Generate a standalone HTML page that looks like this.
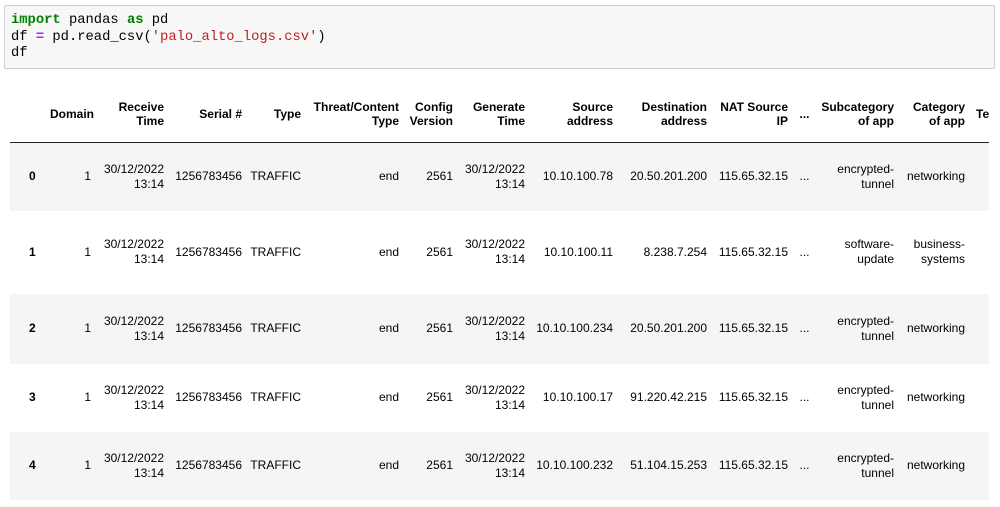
<!DOCTYPE html>
<html><head><meta charset="utf-8"><style>
body{margin:0;background:#fff;width:1000px;height:507px;overflow:hidden;font-family:"Liberation Sans",Arial,sans-serif;color:#000}
.code{position:absolute;left:4px;top:5px;width:989px;height:62px;background:#f7f7f7;border:1px solid #cfcfcf;border-radius:2px}
.code pre{margin:0;position:absolute;left:6px;top:7px;font-family:"Liberation Mono",monospace;font-size:13.8px;line-height:16.5px;color:#000}
.k{color:#008000;font-weight:bold}.o{color:#aa22ff;font-weight:bold}.s{color:#ba2121}
table{position:absolute;left:10px;top:92px;border-collapse:collapse;table-layout:fixed;width:979px;font-size:12px}
td,th{text-align:right;padding:0 5px 0 0;line-height:15px;white-space:nowrap;overflow:visible}
th{font-weight:bold;vertical-align:middle;padding-bottom:6px;height:44px;line-height:14px}
thead tr{border-bottom:1.5px solid #222}
td{vertical-align:middle}
tbody tr:nth-child(odd){background:#f5f5f5}
td.i{text-align:left;padding-left:19px;font-weight:bold}
.l{text-align:left;padding-left:6px}
</style></head><body>
<div class="code"><pre><span class="k">import</span> pandas <span class="k">as</span> pd
df <span class="o">=</span> pd.read_csv(<span class="s">'palo_alto_logs.csv'</span>)
df</pre></div>
<table>
<colgroup><col style="width:40px"><col style="width:46px"><col style="width:73px"><col style="width:78px"><col style="width:59px"><col style="width:98px"><col style="width:54px"><col style="width:72px"><col style="width:88px"><col style="width:94px"><col style="width:81px"><col style="width:23px"><col style="width:83px"><col style="width:71px"><col style="width:19px"></colgroup>
<thead><tr><th></th><th style="padding-right:7px">Domain</th><th>Receive<br>Time</th><th>Serial #</th><th>Type</th><th>Threat/Content<br>Type</th><th>Config<br>Version</th><th>Generate<br>Time</th><th>Source<br>address</th><th>Destination<br>address</th><th>NAT Source<br>IP</th><th style="text-align:center;padding:0 0 6px 0">...</th><th>Subcategory<br>of app</th><th>Category<br>of app</th><th class="l">Te</th></tr></thead>
<tbody>
<tr style="height:68px"><td class="i">0</td><td>1</td><td>30/12/2022<br>13:14</td><td>1256783456</td><td>TRAFFIC</td><td>end</td><td>2561</td><td>30/12/2022<br>13:14</td><td>10.10.100.78</td><td>20.50.201.200</td><td>115.65.32.15</td><td style="text-align:center;padding:0">...</td><td>encrypted-<br>tunnel</td><td>networking</td><td></td></tr>
<tr style="height:83px"><td class="i">1</td><td>1</td><td>30/12/2022<br>13:14</td><td>1256783456</td><td>TRAFFIC</td><td>end</td><td>2561</td><td>30/12/2022<br>13:14</td><td>10.10.100.11</td><td>8.238.7.254</td><td>115.65.32.15</td><td style="text-align:center;padding:0">...</td><td>software-<br>update</td><td>business-<br>systems</td><td></td></tr>
<tr style="height:70px"><td class="i">2</td><td>1</td><td>30/12/2022<br>13:14</td><td>1256783456</td><td>TRAFFIC</td><td>end</td><td>2561</td><td>30/12/2022<br>13:14</td><td>10.10.100.234</td><td>20.50.201.200</td><td>115.65.32.15</td><td style="text-align:center;padding:0">...</td><td>encrypted-<br>tunnel</td><td>networking</td><td></td></tr>
<tr style="height:68px"><td class="i">3</td><td>1</td><td>30/12/2022<br>13:14</td><td>1256783456</td><td>TRAFFIC</td><td>end</td><td>2561</td><td>30/12/2022<br>13:14</td><td>10.10.100.17</td><td>91.220.42.215</td><td>115.65.32.15</td><td style="text-align:center;padding:0">...</td><td>encrypted-<br>tunnel</td><td>networking</td><td></td></tr>
<tr style="height:68px"><td class="i">4</td><td>1</td><td>30/12/2022<br>13:14</td><td>1256783456</td><td>TRAFFIC</td><td>end</td><td>2561</td><td>30/12/2022<br>13:14</td><td>10.10.100.232</td><td>51.104.15.253</td><td>115.65.32.15</td><td style="text-align:center;padding:0">...</td><td>encrypted-<br>tunnel</td><td>networking</td><td></td></tr>
</tbody></table>
</body></html>
